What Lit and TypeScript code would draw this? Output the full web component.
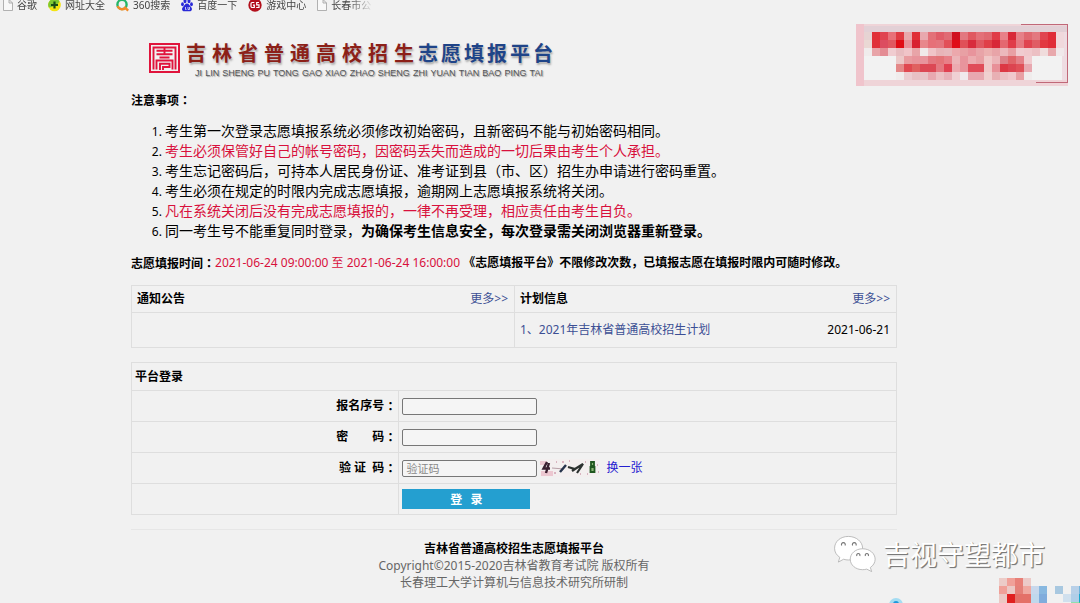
import { LitElement, html, css, svg } from "lit";
import { customElement, state } from "lit/decorators.js";

type Notice = { text: string; strong?: string; alert?: boolean };

const NOTICES: Notice[] = [
  { text: "考生第一次登录志愿填报系统必须修改初始密码，且新密码不能与初始密码相同。" },
  { text: "考生必须保管好自己的帐号密码，因密码丢失而造成的一切后果由考生个人承担。", alert: true },
  { text: "考生忘记密码后，可持本人居民身份证、准考证到县（市、区）招生办申请进行密码重置。" },
  { text: "考生必须在规定的时限内完成志愿填报，逾期网上志愿填报系统将关闭。" },
  { text: "凡在系统关闭后没有完成志愿填报的，一律不再受理，相应责任由考生自负。", alert: true },
  { text: "同一考生号不能重复同时登录，", strong: "为确保考生信息安全，每次登录需关闭浏览器重新登录。" },
];

const PINYIN = "JI LIN SHENG PU TONG GAO XIAO ZHAO SHENG ZHI YUAN TIAN BAO PING TAI".split(" ");

/* One string per mosaic row, one colour per 8px cell; "-" leaves a cell empty. */
const STAMP = [
  "e6d3d3 e12f37 e04450 e87078 e03a42 e8a8ac e03038 e8a8ae e37078 e05c68 e06a74 d01020 e27880 e05860 e37078 e06870 e03c48 e88088 d82838 e68088 e06870 e37880 e04450 e02c38 f0d8dc",
  "ead8d4 e03038 dc4c60 e05860 e00c14 e89098 d82030 e8888c e67078 e4747c e25058 e00c18 e05058 d82c3c e05860 e04048 d82838 e46870 e03c48 e67880 e04450 e05c64 e23840 e02c38 f0d8dc",
  "f0ecec e8a4a8 e48c94 f0ccd0 e8bcc0 f0c4c8 e8a4a8 f0eaea f0c4c8 e8b4b8 e8b8bc eca8ac e8a0a4 e8949c e8a4a8 ecb0b0 e8a4a8 ecb8bc e8a0a4 f0ccd0 f0c8cc ecc0c4 f0dcdc e8a8ac f0e8ea",
  "- - - - ecc8c8 e89ca0 e8949c e8949c e47880 e47478 e88088 ecb4b8 e8949c ecacb0 e8a0a4 f0c8c8 ecb4b8 dc8088 e06468 e48088 f0ccd0 - - - -",
  "- - - - e48888 e04850 e06060 dc4854 dc4854 e47880 e04050 ecaab0 e8949c e04c58 e04c58 f0c8c8 e89098 dc3844 dc4450 e05058 e8a8b0 - - - -",
  "- - - - f0ecec ecccd0 e8c0c4 e8c4c8 e8a8b0 ecc0c4 e8b0b8 f0d0d4 f0e8ec e8a8b0 e8a8b0 f0d0d0 e8b0b4 ecc0c4 f0c8cc e8a0a4 f0ecec - - - -",
];
const CORNER = [
  "ecccc8 f0a098 e88078 eccac8 - - - - - - -",
  "f0a098 ecc8c4 e48078 f0a8a0 c8d8ec 88b8e0 - a8c8e0 - b8d0e8 70b4dc",
  "ecc8c4 e02020 e47068 e47068 c0d8ec 80acdc - - d0e0ee b0cee8 18a8cc",
  "ecc8c4 e02020 e47068 e47068 c0d8ec 80acdc - - - 90e0b0 38c890",
];

const mosaic = (rows: string[]) =>
  rows.map((row, y) =>
    row.split(" ").map((fill, x) =>
      fill === "-" ? null : svg`<rect x=${x * 8} y=${y * 8} width="8" height="8" fill=${"#" + fill} />`
    )
  );

const pageIcon = html`<svg width="10" height="12" viewBox="0 0 10 12"><path d="M.5.5h5.500l3.500 3.500v7.500h-9zM6 .5V4h3.500" fill="#f8f8f8" stroke="#a0a0a0" stroke-width=".8" /></svg>`;

const BOOKMARKS = [
  { label: "谷歌", icon: pageIcon },
  {
    label: "网址大全",
    icon: html`<svg width="13" height="14" viewBox="0 0 13 14"><circle cx="6.500" cy="7" r="6.300" fill="#f4e413" /><path d="M6.500.7a6.300 6.300 0 0 0-5.800 8.800C5 9 10 7 11.500 3.200A6.300 6.300 0 0 0 6.500.7z" fill="#7dc832" /><path d="M6.500 3.500v7M3 7h7" stroke="#174c18" stroke-width="2.200" /></svg>`,
  },
  {
    label: "360搜索",
    icon: html`<svg width="13" height="14" viewBox="0 0 13 14"><circle cx="6" cy="6.500" r="4.600" fill="none" stroke="#24b668" stroke-width="2.400" /><path d="M1.600 8.200A4.700 4.700 0 0 0 9.200 10M8.200 8.800l4 3.800" fill="none" stroke="#f38b28" stroke-width="2.400" /></svg>`,
  },
  {
    label: "百度一下",
    icon: html`<svg width="12" height="14" viewBox="0 0 12 14" fill="#2a2ad8"><ellipse cx="4" cy="3" rx="1.500" ry="2.200" /><ellipse cx="8" cy="3" rx="1.500" ry="2.200" /><ellipse cx="1.500" cy="6.300" rx="1.400" ry="2" /><ellipse cx="10.500" cy="6.300" rx="1.400" ry="2" /><path d="M6 5.500c2 0 2.500 2 4 3.500 2 2.200.5 4.500-1.500 4.300-1.500-.2-3.500-.2-5 0C1.500 13.500 0 11.200 2 9c1.500-1.500 2-3.500 4-3.500z" /><path d="M4.500 9v2.500h1M7 9v2.500h1.500V9" fill="none" stroke="#fff" stroke-width=".7" /></svg>`,
  },
  {
    label: "游戏中心",
    icon: html`<svg width="14" height="14" viewBox="0 0 14 14"><circle cx="7" cy="7" r="6.700" fill="#b3101c" /><path d="M6.300 4.500H4.200a1.200 1.200 0 0 0-1.200 1.200v2.600a1.200 1.200 0 0 0 1.200 1.200h2.100V7.200H5M11 4.500H8.700v2.400H11v2.600H8.200" fill="none" stroke="#fff" stroke-width="1.200" /></svg>`,
  },
  { label: "长春市公", icon: pageIcon },
];

@customElement("app-root")
export class AppRoot extends LitElement {
  @state() private captcha = 0;

  static styles = css`
    :host {
      display: block;
      position: relative;
      min-height: 100vh;
      overflow: hidden;
      box-sizing: border-box;
      background: #f1f1f1;
      color: #000;
      font: 12px/16px "Noto Sans", "Noto Sans CJK SC", sans-serif;
    }
    * { box-sizing: border-box; }
    svg { display: block; flex: none; }
    a { color: #3c4f94; text-decoration: none; }
    h1, h2, p, ol { margin: 0; padding: 0; font-size: inherit; }
    .bookmarks {
      display: flex;
      gap: 11px;
      height: 41px;
      padding-left: 3px;
      margin-top: -3px;
      width: 374px;
      mask-image: linear-gradient(to right, #000 93%, transparent);
    }
    .bookmark {
      display: flex;
      align-items: center;
      gap: 4px;
      height: 16px;
      color: #444;
      font-size: 10px;
      white-space: nowrap;
    }
    .layout { padding-right: 52px; }
    .content { max-width: 766px; margin: 0 auto; }
    .brand { display: flex; gap: 6px; padding-left: 18px; }
    .seal { margin-top: 5px; }
    .name { display: flex; gap: 4px; line-height: 30px; font-size: 20px; font-weight: 700; font-family: "Noto Sans CJK SC", sans-serif; text-shadow: 1px 2px 2px #aaa; }
    .province { display: flex; gap: 6px; color: #8c2018; }
    .platform { display: flex; gap: 3px; color: #1f4488; }
    .pinyin { display: flex; justify-content: space-between; width: 348px; margin-left: 9px; font: 9px/10px "Liberation Sans", sans-serif; color: #555; text-shadow: 1px 1px 1px #999; }
    .attention { padding-top: 14px; }
    .notices { margin: 12px 0 14px; padding-left: 34px; font-size: 14px; line-height: 20px; }
    .notices li::marker { font-size: 12px; }
    .alert-text { color: #d8103c; }
    .period { display: flex; flex-wrap: wrap; white-space: pre; font-weight: 700; }
    .period time, .period .to { color: #d8103c; font-weight: 400; }
    .mark { font-family: "Noto Sans CJK TC", sans-serif; }
    .boards { display: grid; grid-template-columns: 1fr 1fr; margin-top: 13px; border: 1px solid #dedede; }
    .board + .board { border-left: 1px solid #dedede; }
    .row { display: flex; align-items: center; justify-content: space-between; padding: 0 6px 0 5px; }
    .board-head { height: 27px; border-bottom: 1px solid #dedede; }
    .board-body { height: 34px; }
    .login { margin-top: 14px; border: 1px solid #dedede; border-bottom: 0; }
    .login-title { height: 27px; padding-left: 3px; line-height: 27px; }
    .field { display: grid; grid-template-columns: 35% 1fr; height: 31px; border-top: 1px solid #dedede; }
    .login .field:last-child { border-bottom: 1px solid #dedede; height: 32px; }
    .label { display: flex; align-items: center; justify-content: flex-end; padding-right: 2px; border-right: 1px solid #dedede; font-weight: 700; white-space: pre; }
    .control { display: flex; align-items: center; gap: 3px; padding-left: 3px; }
    input { width: 135px; height: 17px; padding: 0 3px; border: 1px solid #777; border-radius: 2px; background: #f5f5f5; font: 11px/14px "Noto Sans", "Noto Sans CJK SC", sans-serif; }
    input::placeholder { color: #888; }
    .refresh { margin-left: 4px; color: #2420d0; }
    .submit { width: 128px; height: 20px; padding: 0; border: 0; background: #249fd0; color: #fff; font: 700 12px/20px "Noto Sans CJK SC", sans-serif; white-space: pre; }
    .footer { margin-top: 14px; padding-top: 10px; border-top: 1px solid #e6e6e6; text-align: center; color: #666; line-height: 17px; }
    .footer .owner { color: #000; font-weight: 700; }
    .stamp { position: absolute; top: 23px; right: 9px; }
    .watermark { position: absolute; right: 35px; bottom: 29px; display: flex; align-items: center; gap: 6px; color: #fff; font: 27px/40px "Noto Sans CJK SC", sans-serif; text-shadow: 1px 1px 1px #777, 1px 1px 0 #999; }
    .corner { position: absolute; right: 0; bottom: 0; }
    .dot { position: absolute; left: 82%; bottom: 0; margin-left: 3px; }
  `;

  private onSubmit(event: Event) {
    event.preventDefault();
  }

  private onRefresh(event: Event) {
    event.preventDefault();
    this.captcha += 1;
  }

  render() {
    const colon = html`<span class="mark">：</span>`;
    return html`
      <nav class="bookmarks" aria-label="书签">
        ${BOOKMARKS.map((b) => html`<a class="bookmark" href="#">${b.icon}<span>${b.label}</span></a>`)}
      </nav>

      <div class="layout">
        <main class="content">
          <header class="brand">
            <svg class="seal" width="31" height="30" viewBox="0 0 31 30" fill="none" stroke="#e0143c">
              <rect x="1" y="1" width="29" height="28" stroke-width="2" />
              <path d="M4.500 26.500V4.500h22v22M7.500 7.800h16M15.500 4.500v7M7.500 11.300h16M10.500 14.500h10M7.500 26.500v-9h16v9M11 27v-6.200h9.500V24h-6.500v3" stroke-width="1.900" />
            </svg>
            <div>
              <h1 class="name">
                <span class="province">${[..."吉林省普通高校招生"].map((c) => html`<span>${c}</span>`)}</span>
                <span class="platform">${[..."志愿填报平台"].map((c) => html`<span>${c}</span>`)}</span>
              </h1>
              <div class="pinyin">${PINYIN.map((w) => html`<span>${w}</span>`)}</div>
            </div>
          </header>

          <h2 class="attention">注意事项${colon}</h2>
          <ol class="notices">
            ${NOTICES.map(
              (n) => html`<li><span class=${n.alert ? "alert-text" : "text"}>${n.text}</span>${n.strong ? html`<strong>${n.strong}</strong>` : null}</li>`
            )}
          </ol>
          <p class="period"><span>志愿填报时间${colon}</span><time>2021-06-24 09:00:00</time><span class="to"> 至 </span><time>2021-06-24 16:00:00</time><span> 《志愿填报平台》不限修改次数，已填报志愿在填报时限内可随时修改。</span></p>

          <div class="boards">
            <section class="board">
              <div class="row board-head"><h2>通知公告</h2><a href="#">更多&gt;&gt;</a></div>
              <div class="row board-body"></div>
            </section>
            <section class="board">
              <div class="row board-head"><h2>计划信息</h2><a href="#">更多&gt;&gt;</a></div>
              <div class="row board-body"><a href="#">1、2021年吉林省普通高校招生计划</a><time>2021-06-21</time></div>
            </section>
          </div>

          <form class="login" @submit=${this.onSubmit}>
            <h2 class="login-title">平台登录</h2>
            <div class="field">
              <label class="label" for="number">报名序号${colon}</label>
              <div class="control"><input id="number" type="text" /></div>
            </div>
            <div class="field">
              <label class="label" for="password">密　　码${colon}</label>
              <div class="control"><input id="password" type="password" /></div>
            </div>
            <div class="field">
              <label class="label" for="code">验 证  码${colon}</label>
              <div class="control">
                <input id="code" type="text" placeholder="验证码" />
                <svg width="59" height="18" viewBox="0 0 59 18" role="img" aria-label="验证码图片">
                  <rect width="59" height="18" fill="#f3efef" />
                  <path d="M0 2h7v4H0zM1 12h12v5H1z" fill="#e8b8c4" opacity=".7" />
                  <path d="M7 3 3.500 9.500H10M9 4 6 14" fill="none" stroke="#3a2030" stroke-width="2.400" />
                  <path d="M12 9l12 1" stroke="#b8a0a8" />
                  <path d="M20 13l6-7" stroke="#26344c" stroke-width="2.400" />
                  <path d="M28 8l7 2 8-5-6 9M35 10l-3 2" fill="none" stroke="#2c3230" stroke-width="2.200" />
                  <path d="M51 3h3v4h-3zM50.500 8h4v5h-4z" fill="#8cb878" stroke="#205820" stroke-width="1.800" />
                  <path d="M16 3h1M29 2h1M40 15h1M22 3h2M45 3h1M47 15h1M57 6h1M58 13h1M14 14h2" stroke="#c07890" />
                </svg>
                <a class="refresh" href="#" @click=${this.onRefresh}>换一张</a>
              </div>
            </div>
            <div class="field">
              <div class="label"></div>
              <div class="control"><button class="submit" type="submit">登   录</button></div>
            </div>
          </form>

          <footer class="footer">
            <p class="owner">吉林省普通高校招生志愿填报平台</p>
            <p>Copyright©2015-2020吉林省教育考试院 版权所有</p>
            <p>长春理工大学计算机与信息技术研究所研制</p>
          </footer>
        </main>
      </div>

      <svg class="stamp" width="215" height="64" viewBox="0 0 215 64" aria-hidden="true" shape-rendering="crispEdges">
        <path d="M0 1h212v62H0z" fill="#efd4d8" />
        <path d="M0 1h8v62H0z" fill="#f0c4cc" />
        <path d="M8 3h203v6H8z" fill="#e2d0d6" />
        <path d="M8 9h198v48H8z" fill="#f2f2f2" />
        <path d="M206 9h5v48h-5z" fill="#eedce2" />
        <path d="M165 1.500h46.500V59.500H180" fill="none" stroke="#c06878" />
        <g transform="translate(8 9)">${mosaic(STAMP)}</g>
      </svg>

      <div class="watermark">
        <svg width="44" height="38" viewBox="0 0 46 40" fill="#fff" stroke="#aaa" stroke-width=".8">
          <path d="M16 1.500C7.500 1.500 1.500 7 1.500 14c0 4 2 7.200 5.500 9.500l-1.500 5 5.500-3c1.600.5 3.300.8 5 .8 8.500 0 15-5.500 15-12.300S24.500 1.500 16 1.500z" />
          <path d="M31 14.500c-7.500 0-13 5-13 11s5.500 11 13 11c1.500 0 3-.2 4.300-.6l5.200 2.600-1.300-4.300c3-2 5-5.200 5-8.700 0-6-5.700-11-13.200-11z" />
          <g fill="none" stroke="#777" stroke-width="1.200">
            <path d="M9 11a2 2 0 1 1 3.500 0M20.500 11a2 2 0 1 1 3.500 0M25 22a1.700 1.700 0 1 1 3 0M34 22a1.700 1.700 0 1 1 3 0" />
          </g>
        </svg>
        <span>吉视守望都市</span>
      </div>
      <svg class="dot" width="14" height="5" viewBox="0 0 14 5" aria-hidden="true"><circle cx="7" cy="7" r="7" fill="#a4dcf2" /><circle cx="7" cy="6" r="3" fill="#1c98dc" /></svg>
      <svg class="corner" width="81" height="25" viewBox="0 0 81 25" aria-hidden="true" shape-rendering="crispEdges">${mosaic(CORNER)}</svg>
    `;
  }
}
